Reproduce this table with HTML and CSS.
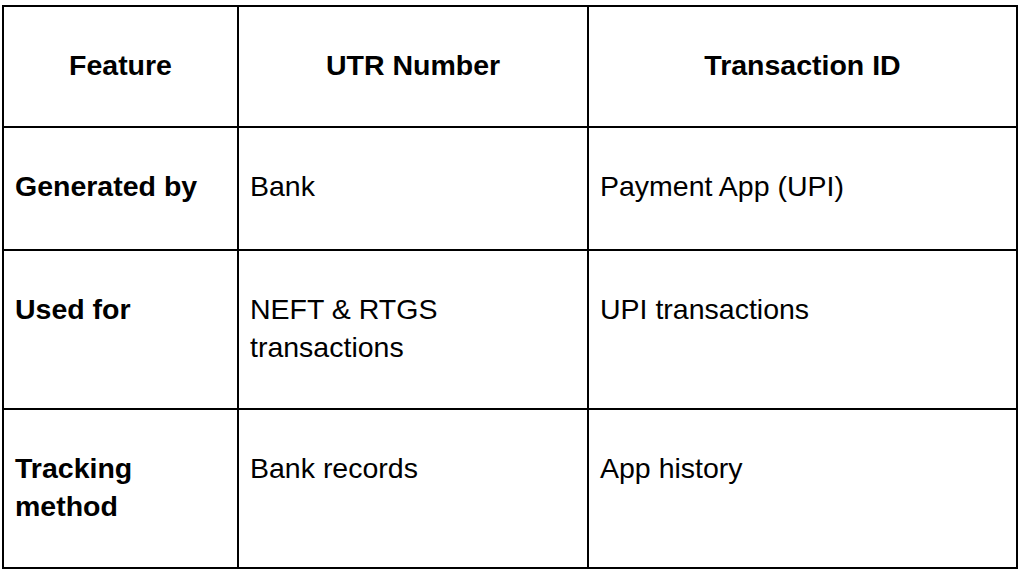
FILE: index.html
```html
<!DOCTYPE html>
<html lang="en">
<head>
<meta charset="utf-8">
<title>UTR Number vs Transaction ID</title>
<link rel="stylesheet" href="styles.css">
</head>
<body>
<table class="compare">
  <colgroup>
    <col class="c1">
    <col class="c2">
    <col class="c3">
  </colgroup>
  <thead>
    <tr>
      <th>Feature</th>
      <th>UTR Number</th>
      <th>Transaction ID</th>
    </tr>
  </thead>
  <tbody>
    <tr class="single">
      <th class="rowhead">Generated by</th>
      <td>Bank</td>
      <td>Payment App (UPI)</td>
    </tr>
    <tr>
      <th class="rowhead">Used for</th>
      <td>NEFT &amp; RTGS transactions</td>
      <td>UPI transactions</td>
    </tr>
    <tr>
      <th class="rowhead">Tracking method</th>
      <td>Bank records</td>
      <td>App history</td>
    </tr>
  </tbody>
</table>
</body>
</html>
```

FILE: styles.css
```css
html, body {
  margin: 0;
  padding: 0;
  background: #ffffff;
}
body {
  padding: 5px 0 0 2px;
  font-family: "Liberation Sans", Arial, Helvetica, sans-serif;
  color: #000000;
}
.compare {
  border-collapse: collapse;
  table-layout: fixed;
  width: 1014px;
  border: 2px solid #000;
  font-size: 28.5px;
  line-height: 38px;
}
.c1 { width: 235px; }
.c2 { width: 350px; }
.c3 { width: 429px; }
.compare th,
.compare td {
  border: 2px solid #000;
  padding: 39px 11px 42px;
  vertical-align: top;
  text-align: left;
  font-weight: normal;
}
.compare .single th,
.compare .single td {
  padding-bottom: 44px;
}
.compare thead th {
  text-align: center;
  font-weight: bold;
}
.compare .rowhead {
  font-weight: bold;
}
```
